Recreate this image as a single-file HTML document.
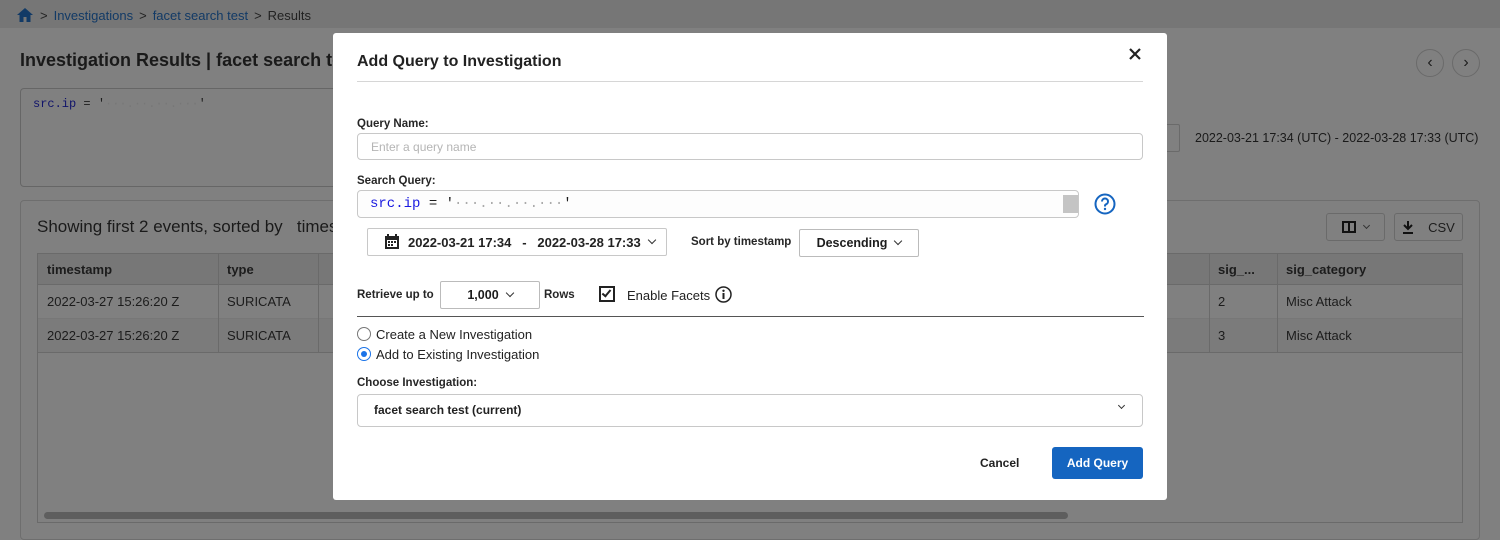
<!DOCTYPE html>
<html><head><meta charset="utf-8"><style>
*{box-sizing:border-box;margin:0;padding:0}
body{width:1500px;height:537px;overflow:hidden;background:#808080;font-family:"Liberation Sans",Arial,sans-serif;color:#1c1c1c;position:relative;font-size:13px}
.a{position:absolute}
.top{left:0;top:0;width:1500px;height:28px;background:#767676}
.bc{top:7px;left:16px;font-size:13px;color:#222;display:flex;align-items:center;gap:6px}
.bc .l{color:#123a66}
.title{left:20px;top:50px;font-size:18px;font-weight:bold;color:#1a1a1a}
.qbox{left:20px;top:88px;width:330px;height:99px;border:1px solid #666;border-radius:4px}
.mono{font-family:"Liberation Mono",monospace}
.card{left:20px;top:200px;width:1460px;height:340px;border:1px solid #6e6e6e;border-radius:4px}
.tbl{left:37px;top:253px;width:1426px;height:270px;border:1px solid #6a6a6a}
.th{background:#777;font-weight:bold}
.cell{position:absolute;padding-left:9px;font-size:13px;line-height:32px}
.dlg{left:333px;top:33px;width:834px;height:467px;background:#fff;border-radius:3px}
.lbl{font-size:11.5px;font-weight:bold;color:#262626}
.inp{border:1px solid #c8c8c8;border-radius:4px;background:#fff}
.btn{border:1px solid #bbb;border-radius:2px;display:flex;align-items:center;justify-content:center;font-size:12.5px;font-weight:bold}
.chev{display:inline-block;width:6px;height:6px;border-right:1.5px solid #333;border-bottom:1.5px solid #333;transform:rotate(45deg);margin-left:8px;margin-top:-4px}
</style></head><body>
<div class="a top"></div>
<div class="a bc"><svg width="18" height="16" viewBox="0 0 18 16"><path d="M9 1L1 8h2.5v7h4v-5h3v5h4V8H17z" fill="#123a66"/></svg><span>&gt;</span><span class="l">Investigations</span><span>&gt;</span><span class="l">facet search test</span><span>&gt;</span><span>Results</span></div>
<div class="a title">Investigation Results | facet search test</div>
<div class="a qbox"><div class="mono" style="position:absolute;left:12px;top:8px;font-size:12px"><span style="color:#10136a">src.ip</span> = '<span style="color:#777">···.··.··.···</span>'</div></div>
<div class="a" style="left:1416px;top:49px;width:28px;height:28px;border:1px solid #6a6a6a;border-radius:50%;text-align:center;line-height:26px;font-size:16px">&#8249;</div>
<div class="a" style="left:1452px;top:49px;width:28px;height:28px;border:1px solid #6a6a6a;border-radius:50%;text-align:center;line-height:26px;font-size:16px">&#8250;</div>
<div class="a" style="left:1150px;top:124px;width:30px;height:28px;border:1px solid #6a6a6a;border-radius:2px"></div>
<div class="a" style="left:1195px;top:131px;font-size:12.5px;color:#1a1a1a">2022-03-21 17:34 (UTC) - 2022-03-28 17:33 (UTC)</div>
<div class="a card"></div>
<div class="a" style="left:37px;top:217px;font-size:17px;color:#1a1a1a">Showing first 2 events, sorted by &nbsp; timestamp</div>
<div class="a" style="left:1326px;top:213px;width:59px;height:28px;border:1px solid #6a6a6a;border-radius:3px;display:flex;align-items:center;justify-content:center"><svg width="14" height="12"><rect x="1" y="1" width="12" height="10" fill="none" stroke="#111" stroke-width="2"/><line x1="7" y1="1" x2="7" y2="11" stroke="#111" stroke-width="2"/></svg><span class="chev" style="width:5px;height:5px"></span></div>
<div class="a" style="left:1394px;top:213px;width:69px;height:28px;border:1px solid #6a6a6a;border-radius:3px;display:flex;align-items:center;justify-content:center;gap:14px;font-size:13px"><svg width="12" height="14"><path d="M6 1v8M2 5l4 4 4-4M1 13h10" stroke="#111" stroke-width="2" fill="none"/></svg>CSV</div>
<div class="a tbl">
 <div class="th" style="position:absolute;left:0;top:0;width:100%;height:31px;border-bottom:1px solid #6a6a6a"></div>
 <div class="cell" style="left:0;top:0;font-weight:bold">timestamp</div>
 <div class="cell" style="left:180px;top:0;font-weight:bold">type</div>
 <div class="cell" style="left:0;top:32px">2022-03-27 15:26:20 Z</div>
 <div class="cell" style="left:180px;top:32px">SURICATA</div>
 <div style="position:absolute;left:0;top:64px;width:100%;height:35px;background:#7b7b7b;border-top:1px solid #777;border-bottom:1px solid #6a6a6a"></div>
 <div class="cell" style="left:0;top:66px">2022-03-27 15:26:20 Z</div>
 <div class="cell" style="left:180px;top:66px">SURICATA</div>
 <div style="position:absolute;left:180px;top:0;width:1px;height:99px;background:#6a6a6a"></div>
 <div style="position:absolute;left:280px;top:0;width:1px;height:99px;background:#6a6a6a"></div>
 <div style="position:absolute;left:1171px;top:0;width:1px;height:99px;background:#6a6a6a"></div>
 <div style="position:absolute;left:1239px;top:0;width:1px;height:99px;background:#6a6a6a"></div>
 <div class="cell" style="left:1171px;top:0;font-weight:bold">sig_...</div>
 <div class="cell" style="left:1239px;top:0;font-weight:bold">sig_category</div>
 <div class="cell" style="left:1171px;top:32px">2</div>
 <div class="cell" style="left:1239px;top:32px">Misc Attack</div>
 <div class="cell" style="left:1171px;top:66px">3</div>
 <div class="cell" style="left:1239px;top:66px">Misc Attack</div>
 <div style="position:absolute;left:6px;top:258px;width:1024px;height:7px;background:#5e5e5e;border-radius:4px"></div>
</div>

<div class="a dlg">
 <div class="a" style="left:24px;top:20px;font-size:16px;font-weight:bold;color:#222">Add Query to Investigation</div>
 <svg class="a" style="left:796px;top:15px" width="12" height="12" viewBox="0 0 12 12"><path d="M1 1L11 11M11 1L1 11" stroke="#222" stroke-width="2.2"/></svg>
 <div class="a" style="left:24px;top:48px;width:786px;height:1px;background:#d6d6d6"></div>
 <div class="a lbl" style="left:24px;top:85px">Query Name:</div>
 <div class="a inp" style="left:24px;top:100px;width:786px;height:27px;padding-left:13px;line-height:26px;font-size:12px;color:#b5b5b5">Enter a query name</div>
 <div class="a lbl" style="left:24px;top:142px">Search Query:</div>
 <div class="a inp" style="left:24px;top:157px;width:722px;height:28px;background:#fdfdfd">
  <div class="mono" style="position:absolute;left:12px;top:5px;font-size:14px"><span style="color:#1a1ae0">src.ip</span> = '<span style="color:#aaa">···.··.··.···</span>'</div>
  <div style="position:absolute;right:0;top:4px;width:15px;height:18px;background:#c4c4c4"></div>
 </div>
 <svg class="a" style="left:761px;top:160px" width="22" height="22" viewBox="0 0 22 22"><circle cx="11" cy="11" r="9.5" fill="none" stroke="#1565c0" stroke-width="2"/><path d="M8 8.5a3 3 0 1 1 4 2.8c-.8.4-1 .9-1 1.7v.5" fill="none" stroke="#1565c0" stroke-width="2"/><circle cx="11" cy="16" r="1.2" fill="#1565c0"/></svg>
 <div class="a" style="left:34px;top:195px;width:300px;height:28px;border:1px solid #c8c8c8;border-radius:2px;display:flex;align-items:center;padding-left:16px;font-size:13px;font-weight:bold;color:#222">
  <svg width="16" height="16" viewBox="0 0 16 16"><rect x="1" y="2" width="14" height="13" fill="#222"/><rect x="3" y="6" width="10" height="7" fill="#fff"/><rect x="4" y="7" width="2" height="2" fill="#222"/><rect x="7" y="7" width="2" height="2" fill="#222"/><rect x="10" y="7" width="2" height="2" fill="#222"/><rect x="4" y="10" width="2" height="2" fill="#222"/><rect x="7" y="10" width="2" height="2" fill="#222"/><rect x="3" y="0" width="2" height="3" fill="#222"/><rect x="11" y="0" width="2" height="3" fill="#222"/></svg>
  <span style="margin-left:8px">2022-03-21 17:34 &nbsp; - &nbsp; 2022-03-28 17:33</span><span class="chev"></span></div>
 <div class="a lbl" style="left:358px;top:203px">Sort by timestamp</div>
 <div class="a btn" style="left:466px;top:196px;width:120px;height:28px">Descending<span class="chev"></span></div>
 <div class="a lbl" style="left:24px;top:256px">Retrieve up to</div>
 <div class="a btn" style="left:107px;top:248px;width:100px;height:28px">1,000<span class="chev"></span></div>
 <div class="a lbl" style="left:211px;top:256px">Rows</div>
 <div class="a" style="left:266px;top:253px;width:16px;height:16px;border:2px solid #222"><div style="position:absolute;left:3px;top:0;width:5px;height:9px;border-right:2px solid #222;border-bottom:2px solid #222;transform:rotate(40deg)"></div></div>
 <div class="a" style="left:294px;top:255px;font-size:13px;color:#222">Enable Facets</div>
 <svg class="a" style="left:382px;top:253px" width="17" height="17"><circle cx="8.5" cy="8.5" r="7.5" fill="none" stroke="#222" stroke-width="1.5"/><rect x="7.5" y="7" width="2" height="6" fill="#222"/><circle cx="8.5" cy="4.8" r="1.2" fill="#222"/></svg>
 <div class="a" style="left:24px;top:283px;width:787px;height:1px;background:#555"></div>
 <div class="a" style="left:24px;top:294px;width:14px;height:14px;border:1.5px solid #777;border-radius:50%"></div>
 <div class="a" style="left:43px;top:294px;font-size:13px;color:#222">Create a New Investigation</div>
 <div class="a" style="left:24px;top:314px;width:14px;height:14px;border:1.5px solid #1a73e8;border-radius:50%"><div style="position:absolute;left:2.5px;top:2.5px;width:6px;height:6px;border-radius:50%;background:#1a73e8"></div></div>
 <div class="a" style="left:43px;top:314px;font-size:13px;color:#222">Add to Existing Investigation</div>
 <div class="a lbl" style="left:24px;top:344px">Choose Investigation:</div>
 <div class="a inp" style="left:24px;top:361px;width:786px;height:33px;padding-left:16px;line-height:31px;font-size:12px;font-weight:bold;color:#222">facet search test (current)<span class="chev" style="position:absolute;right:18px;top:12px;width:5px;height:5px"></span></div>
 <div class="a" style="left:647px;top:423px;font-size:12px;font-weight:bold;color:#222">Cancel</div>
 <div class="a" style="left:719px;top:414px;width:91px;height:32px;background:#1565c0;border-radius:3px;color:#fff;font-size:12px;font-weight:bold;text-align:center;line-height:32px">Add Query</div>
</div>
</body></html>
